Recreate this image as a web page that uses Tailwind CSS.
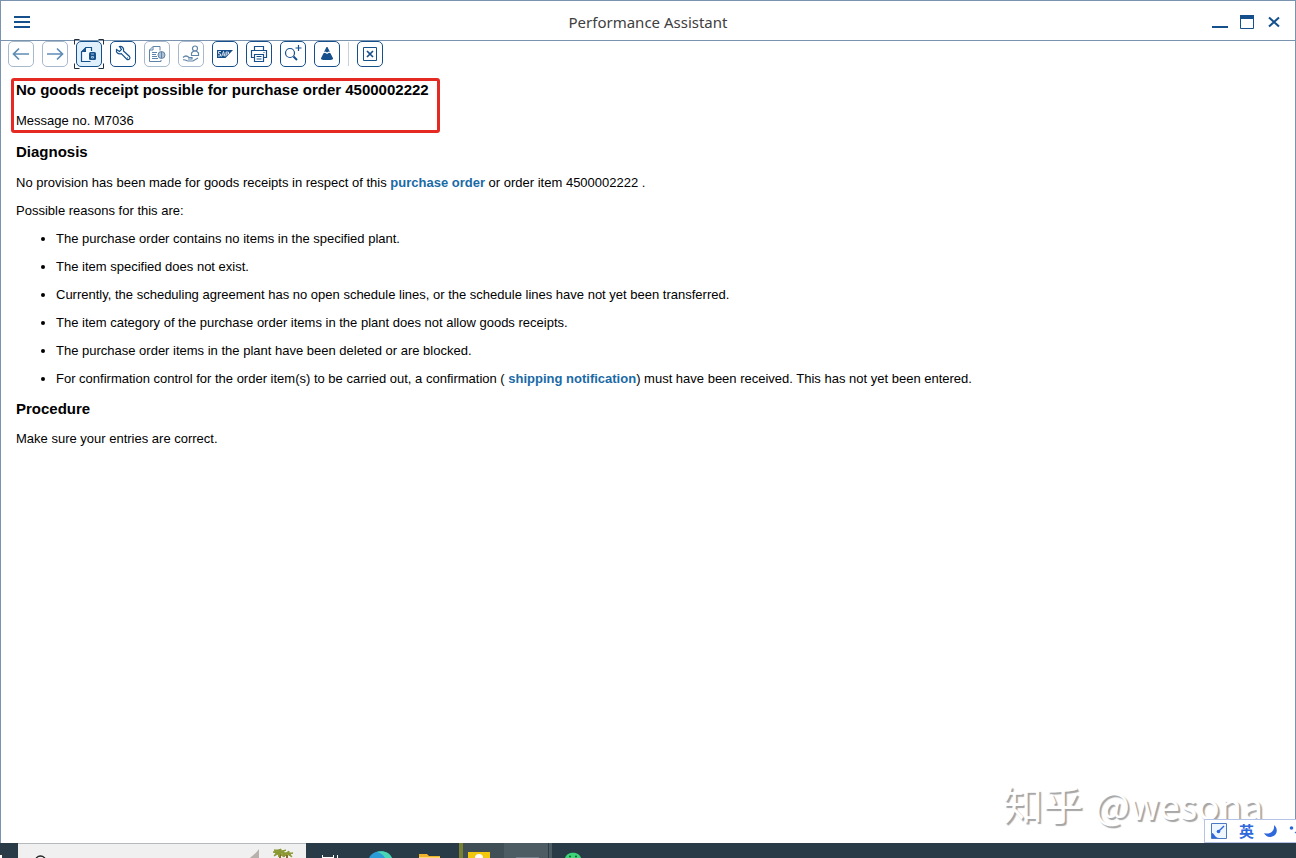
<!DOCTYPE html>
<html lang="en">
<head>
<meta charset="utf-8">
<meta name="viewport" content="width=device-width, initial-scale=1">
<title>Performance Assistant</title>
<script src="https://cdn.jsdelivr.net/npm/@tailwindcss/browser@4"></script>
</head>
<body class="flex h-screen flex-col overflow-hidden bg-white font-['Liberation_Sans',sans-serif] text-[13px] leading-4 text-black">
<main class="relative flex min-h-0 flex-1 flex-col border border-b-0 border-[#7a94b0]">
  <header class="flex h-10 shrink-0 items-center justify-between border-b border-[#7a94b0] px-[11px] pt-[2px] text-[#15508c]">
    <div class="flex flex-1 items-center">
      <button type="button" aria-label="Menu" class="flex size-5 items-center justify-center">
        <svg class="size-4" viewBox="0 0 16 16" fill="currentColor"><path d="M0 2h16v2H0zM0 7h16v2H0zM0 12h16v2H0z"/></svg>
      </button>
    </div>
    <h1 class="font-['Noto_Sans',sans-serif] text-[15px] leading-5 text-[#404040]">Performance Assistant</h1>
    <div class="flex flex-1 items-center justify-end gap-[7px]">
      <button type="button" aria-label="Minimize" class="flex size-5 items-center justify-center"><svg class="size-4" viewBox="0 0 16 16"><path d="M0 12h16v2H0z" fill="currentColor"/></svg></button>
      <button type="button" aria-label="Maximize" class="flex size-5 items-center justify-center"><svg class="size-4" viewBox="0 0 16 16" fill="none" stroke="currentColor"><path d="M1.500 1.500h13v13h-13z"/><path d="M1 3h14" stroke-width="4"/></svg></button>
      <button type="button" aria-label="Close" class="flex size-5 items-center justify-center"><svg class="size-4" viewBox="0 0 16 16" fill="none" stroke="currentColor" stroke-width="2"><path d="M3 3.500l10 9M13 3.500l-10 9"/></svg></button>
    </div>
  </header>

  <nav aria-label="Toolbar" class="flex shrink-0 items-center gap-2 px-[7px] text-[#15508c]">
    <button type="button" disabled aria-label="Back" class="flex size-[26px] items-center justify-center rounded-[5px] border border-[#a7b9cc] text-[#5f8db5]"><svg class="size-5" viewBox="0 0 20 20" fill="none" stroke="currentColor" stroke-width="1.700"><path d="M18 10H3M8 4.500L2.500 10 8 15.500"/></svg></button>
    <button type="button" disabled aria-label="Forward" class="flex size-[26px] items-center justify-center rounded-[5px] border border-[#a7b9cc] text-[#5f8db5]"><svg class="size-5" viewBox="0 0 20 20" fill="none" stroke="currentColor" stroke-width="1.700"><path d="M2 10h15M12 4.500l5.500 5.500-5.500 5.500"/></svg></button>
    <button type="button" aria-label="Application help" class="relative flex size-[26px] items-center justify-center rounded-[5px] border border-[#15508c] bg-[#dff0fc]">
      <svg class="size-5" viewBox="0 0 20 20"><path d="M7 3.500h6v13H2.500V8z" fill="#f1f9ff"/><path d="M12.500 7V3.500H7L2.500 8v9.500h9" fill="none" stroke="currentColor" stroke-width="1.200"/><path d="M2 8l5-5v5z" fill="currentColor"/><rect x="10" y="8" width="7" height="8" rx="1.500" fill="currentColor"/><path d="M12 10h3M12.500 12.500h2v1.500h-2z" fill="none" stroke="#b9d8f0" stroke-width=".8"/></svg>
      <svg class="absolute -left-[3px] -top-[3px] size-[30px]" viewBox="0 0 30 30" fill="none" stroke="#222f3d"><path d="M.5 5.500v-5h5M24.500.5h5v5M29.500 24.500v5h-5M5.500 29.500h-5v-5"/></svg>
    </button>
    <button type="button" aria-label="Technical information" class="flex size-[26px] items-center justify-center rounded-[5px] border border-[#15508c]"><svg class="size-5" viewBox="0 0 20 20" fill="none" stroke="currentColor" stroke-width="1.200"><path d="M3.500 5.500l3 2 2-2-2-3C9 2.200 11.300 4 10.500 7l6 5.500c1.500 2-.9 4.100-2.700 2.700L8.300 9.700c-3.200.8-5.500-1.200-4.800-4.200z"/><path d="M14 14h1"/></svg></button>
    <button type="button" disabled aria-label="Web document" class="flex size-[26px] items-center justify-center rounded-[5px] border border-[#a7b9cc] text-[#5f84a9]"><svg class="size-5" viewBox="0 0 20 20" fill="none" stroke="currentColor"><path d="M13 6.500v-4H6L2.500 6v11.500H14V16M6 2.500V6H2.500M5 8.500h5M5 10.500h4M5 12.500h5M5 14.500h6"/><circle cx="14.500" cy="11" r="3.500"/><path d="M11 11h7M14.500 7.500v7M12 9h5M12 13h5"/></svg></button>
    <button type="button" disabled aria-label="Customizing" class="flex size-[26px] items-center justify-center rounded-[5px] border border-[#a7b9cc] text-[#5f84a9]"><svg class="size-5" viewBox="0 0 20 20" fill="none" stroke="currentColor" stroke-width="1.200"><circle cx="14" cy="4.500" r="2.500"/><path d="M10.500 11.500V9l2-2h3l2 2v2.500zM2 13.500c2-2 4-2 6 0h3v1.500H7M2 16c2-1 3 1 5 1h5l5-3"/></svg></button>
    <button type="button" aria-label="SAP" class="flex size-[26px] items-center justify-center rounded-[5px] border border-[#15508c]"><svg class="size-5" viewBox="0 0 20 20"><path d="M2 6h16l-7.500 8H2z" fill="currentColor"/><path d="M6 7.500H3.500v2l2 .5v2H3M6.500 12.500l2-5 1.500 5M7.500 11h2M11 12V8h2.500v2H11" fill="none" stroke="#fff" stroke-width=".8"/></svg></button>
    <button type="button" aria-label="Print" class="flex size-[26px] items-center justify-center rounded-[5px] border border-[#15508c]"><svg class="size-5" viewBox="0 0 20 20" fill="none" stroke="currentColor" stroke-width="1.200"><path d="M5.500 6.500v-4h9v4M5.500 13.500h-3v-7h15v7h-3M5.500 10.500h9v7h-9zM7.500 12.500h5M7.500 15h5M14.500 8.500h1"/></svg></button>
    <button type="button" aria-label="Find" class="flex size-[26px] items-center justify-center rounded-[5px] border border-[#15508c]"><svg class="size-5" viewBox="0 0 20 20" fill="none" stroke="currentColor" stroke-width="1.200"><circle cx="7" cy="9" r="4.500"/><path d="M15.500 1v6M12.500 4h6"/><path d="M10.500 12.500l3.500 3.500" stroke-width="2"/></svg></button>
    <button type="button" aria-label="Expert mode" class="flex size-[26px] items-center justify-center rounded-[5px] border border-[#15508c]"><svg class="size-5" viewBox="0 0 20 20" fill="currentColor"><path d="M9.500 3h1L13 8l-1.200-.5L10 8.500l-1.800-1L7 8zM6.500 9.200L8 8.700l2 1.200 2-1.200 1.500.5 2.500 5c.6 1.600-2.500 1.800-6 1.800s-6.600-.2-6-1.800z"/></svg></button>
    <span class="h-6 w-px bg-[#c8d0d8]"></span>
    <button type="button" aria-label="Exit" class="flex size-[26px] items-center justify-center rounded-[5px] border border-[#15508c]"><svg class="size-5" viewBox="0 0 20 20" fill="none" stroke="currentColor"><path d="M3.500 3.500h13v13h-13z"/><path d="M7 7l6 6M13 7l-6 6" stroke-width="1.700"/></svg></button>
  </nav>

  <article class="min-h-0 flex-1 px-[10px] pt-[11px]">
    <section class="w-fit rounded-[3px] border-3 border-[#e52a24] py-px pl-[2px] pr-2">
      <h2 class="text-[15px] font-bold leading-4">No goods receipt possible for purchase order 4500002222</h2>
      <p class="mt-[15px]">Message no. M7036</p>
    </section>
    <div class="px-[5px]">
      <h2 class="mt-[11px] text-[15px] font-bold">Diagnosis</h2>
      <p class="mt-[15px]">No provision has been made for goods receipts in respect of this <a href="#" class="font-bold text-[#1a6aa6]">purchase order</a> or order item 4500002222 .</p>
      <p class="mt-3">Possible reasons for this are:</p>
      <ul class="mt-3 list-disc space-y-3 pl-10">
        <li>The purchase order contains no items in the specified plant.</li>
        <li>The item specified does not exist.</li>
        <li>Currently, the scheduling agreement has no open schedule lines, or the schedule lines have not yet been transferred.</li>
        <li>The item category of the purchase order items in the plant does not allow goods receipts.</li>
        <li>The purchase order items in the plant have been deleted or are blocked.</li>
        <li>For confirmation control for the order item(s) to be carried out, a confirmation ( <a href="#" class="font-bold text-[#1a6aa6]">shipping notification</a>) must have been received. This has not yet been entered.</li>
      </ul>
      <h2 class="mt-[14px] text-[15px] font-bold">Procedure</h2>
      <p class="mt-[14px]">Make sure your entries are correct.</p>
    </div>
  </article>

  <p class="absolute bottom-3 right-8 flex items-baseline gap-3 whitespace-nowrap font-['Noto_Sans_CJK_SC',sans-serif] text-[37px] leading-[54px] text-white [text-shadow:2px_2px_1px_#a5a5a5]"><span lang="zh" class="text-[40px]">知乎</span><span>@wesona</span></p>
  <div class="absolute -right-px bottom-0 flex h-6 w-[92px] items-center overflow-hidden border border-r-0 border-[#b5c3e6] bg-white pl-[6px] text-[#2f67dd]">
    <svg class="size-4 shrink-0" viewBox="0 0 16 16"><path d="M.5.5h15v15H.5z" fill="#eef7ff" stroke="#4a7ac4"/><path d="M1 10c2 0 3 5 7 5H1z" fill="currentColor"/><path d="M7 9l6-6" stroke="currentColor" stroke-width="1.500"/><circle cx="7.500" cy="8.500" r="1.800" fill="currentColor"/></svg>
    <span lang="zh" class="ml-3 font-['Noto_Sans_CJK_SC',sans-serif] text-[15px] font-bold">英</span>
    <svg class="ml-[10px] size-[14px] shrink-0" viewBox="0 0 14 14" fill="currentColor"><path d="M10 1c5 4 3 12-4 12-3 0-5-2-6-4 6 2 11-2 10-8z"/></svg>
    <svg class="ml-[11px] h-4 w-[7px] shrink-0" viewBox="0 0 7 16" fill="currentColor"><circle cx="2.500" cy="5" r="1.800"/><path d="M7 9c-1 0-1 1 0 1z" stroke="currentColor"/></svg>
  </div>
</main>

<footer class="flex h-[15px] shrink-0 overflow-hidden bg-[#293b46]">
  <div class="flex w-[18px] items-end"><span class="h-[3px] w-[2px] bg-white"></span></div>
  <div class="w-[288px] border-t border-[#b4b9bb] bg-[#f0f0f0]">
    <svg class="h-[14px] w-full" viewBox="0 0 288 14"><circle cx="22.500" cy="17.500" r="5.500" fill="none" stroke="#222" stroke-width="1.300"/><path d="M232 14c1-2 5-3 9-9v9z" fill="#b7b1ac"/><path d="M262 14V9M269 14v-3" stroke="#8a6a35" stroke-width="2"/><path d="M255 8l4-1-3-1 4 0 3-1 0 2 5-1-3 2 3 3-4-2-2 1-1 3-1-3-4 2 2-3zM263 11l3-2-3-1 5 1 3-2 0 2 4 0-3 1 2 3-5-3-3 3z" fill="#8c9832" stroke="#8c9832"/></svg>
  </div>
  <svg class="h-[15px] w-[292px]" viewBox="0 0 292 15">
    <path d="M16.500 15v-3M16 14.500h11M27.500 15v-3M31.500 12v3M20 14.500h4" stroke="#fff" fill="none"/>
    <path d="M63 15c4-9 18-9 23 0z" fill="#2c9cd9"/><path d="M71 9c7-2 13 1 15 6h-7c-2-4-5-5-8-6z" fill="#49d6b4"/>
    <path d="M113 11h8l2 2h11v2h-21z" fill="#f0b12c"/><path d="M113 14h21v1h-21z" fill="#ffd66c"/>
    <path d="M153 0h4v15h-4z" fill="#788032"/><path d="M157 0h41v15h-41z" fill="#404e55"/><path d="M162 9h22v6h-22z" fill="#f2c80f"/><circle cx="173" cy="15" r="4" fill="#fff"/>
    <path d="M198 0h44v15h-44z" fill="#4d5b62"/><path d="M210 14.500h23" stroke="#73828a"/><path d="M243 0h3v15h-3z" fill="#4d5b62"/>
    <path d="M259 15c2-7 14-7 16 0z" fill="#3bd477"/><circle cx="264" cy="13.500" r="1" fill="#185d39"/><circle cx="270" cy="13.500" r="1" fill="#185d39"/>
  </svg>
</footer>
</body>
</html>
